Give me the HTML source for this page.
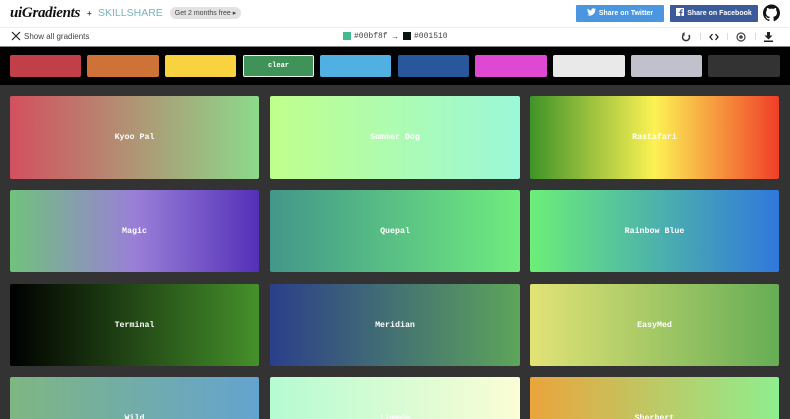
<!DOCTYPE html>
<html>
<head>
<meta charset="utf-8">
<style>
html,body{margin:0;padding:0;width:790px;height:419px;overflow:hidden;background:#333;font-family:"Liberation Sans",sans-serif}
#w{position:relative;width:790px;height:419px;overflow:hidden;background:#333}
.abs,.sw,.card{position:absolute}
.top{position:absolute;left:0;top:0;width:790px;height:27px;background:#fff}
.bar{position:absolute;left:0;top:27px;width:790px;height:19px;background:#fff;border-top:1px solid #eee}
.strip{position:absolute;left:0;top:46px;width:790px;height:39px;background:#020202;border-top:1px solid #888;box-sizing:border-box}
.sw{top:55px;height:22px;border-radius:2px}
.card{width:249px;height:83px;border-radius:2px;color:#fff;font:bold 8.3px/84px "Liberation Mono",monospace;text-align:center;overflow:hidden}
.last{height:42px;border-radius:2px 2px 0 0}
.t{position:absolute;white-space:nowrap}
.btn{position:absolute;top:5px;height:17px;border-radius:1px;color:#fff;font:bold 7px/17px "Liberation Sans",sans-serif;text-align:center}
</style>
</head>
<body>
<div id="w">
<div class="top"></div>
<div class="t" style="left:10px;top:4px;font:italic bold 15px/19px 'Liberation Serif',serif;color:#111;letter-spacing:-.3px">uiGradients</div>
<div class="t" style="left:87px;top:8px;font:bold 8px/11px 'Liberation Sans',sans-serif;color:#444">+</div>
<div class="t" style="left:98px;top:6px;font:10.500px/14px 'Liberation Sans',sans-serif;color:#75b5bd;letter-spacing:0">SKILLSHARE</div>
<div class="t" style="left:170px;top:7px;width:71px;height:12px;border-radius:6px;background:#e2e2e2;color:#444;font:7px/13px 'Liberation Sans',sans-serif;text-align:center">Get 2 months free ▸</div>
<div class="btn" style="left:576px;width:88px;background:#4a96e0"><svg width="9" height="8" viewBox="0 0 24 20" style="vertical-align:-1px;margin-right:3px"><path fill="#fff" d="M24 2.4c-.9.4-1.8.7-2.8.8 1-.6 1.8-1.6 2.2-2.7-1 .6-2 1-3.1 1.2A4.9 4.9 0 0 0 11.900 6.200C7.800 6 4.200 4 1.700 1c-1.300 2.300-.6 5.100 1.500 6.600-.8 0-1.600-.2-2.200-.6 0 2.400 1.700 4.400 3.900 4.900-.7.200-1.500.2-2.200.1.600 2 2.400 3.400 4.600 3.400A9.900 9.900 0 0 1 0 17.400 14 14 0 0 0 21.500 5c1-.7 1.900-1.600 2.500-2.600z"/></svg>Share on Twitter</div>
<div class="btn" style="left:670px;width:88px;background:#3b5a99"><svg width="8" height="8" viewBox="0 0 8 8" style="vertical-align:-1px;margin-right:3px"><path fill="#fff" d="M0 0h8v8H5.500V5h1l.2-1.200H5.500V3c0-.4.200-.6.600-.6h.7V1.300H5.800C4.700 1.300 4.200 2 4.200 3v.8h-1V5h1v3H0z"/></svg>Share on Facebook</div>
<svg class="abs" style="left:763px;top:4px" width="17" height="18" viewBox="0 0 16 16"><path fill="#111" d="M8 0C3.580 0 0 3.580 0 8c0 3.540 2.290 6.530 5.470 7.590.4.070.55-.17.55-.38v-1.340c-2.230.48-2.690-1.070-2.690-1.070-.36-.92-.89-1.170-.89-1.170-.73-.5.060-.49.060-.49.800.06 1.220.82 1.220.82.710 1.220 1.870.870 2.330.660.070-.52.280-.87.510-1.070-1.780-.2-3.640-.89-3.640-3.950 0-.87.310-1.590.820-2.150-.08-.2-.36-1.020.08-2.120 0 0 .67-.21 2.200.82a7.600 7.600 0 0 1 4 0c1.530-1.040 2.200-.82 2.200-.82.440 1.100.160 1.920.080 2.120.51.560.820 1.270.820 2.150 0 3.070-1.870 3.750-3.650 3.950.290.250.540.730.540 1.480v2.200c0 .210.150.460.550.380A8 8 0 0 0 16 8c0-4.420-3.580-8-8-8z"/></svg>

<div class="bar"></div>
<svg class="abs" style="left:11px;top:31px" width="10" height="10" viewBox="0 0 10 10"><path stroke="#222" stroke-width="1.200" fill="none" d="M1 1l8 8M9 1l-8 8"/></svg>
<div class="t" style="left:24px;top:31px;font:8px/12px 'Liberation Sans',sans-serif;color:#444">Show all gradients</div>
<div class="abs" style="left:343px;top:32px;width:8px;height:8px;background:#43bb8e"></div>
<div class="t" style="left:354px;top:31px;font:8px/12px 'Liberation Mono',monospace;color:#444">#00bf8f</div>
<div class="t" style="left:391px;top:31px;font:8px/12px 'Liberation Sans',sans-serif;color:#444">→</div>
<div class="abs" style="left:403px;top:32px;width:8px;height:8px;background:#0a1512"></div>
<div class="t" style="left:414px;top:31px;font:8px/12px 'Liberation Mono',monospace;color:#444">#001510</div>
<svg class="abs" style="left:681px;top:32px" width="10" height="10" viewBox="0 0 10 10"><path stroke="#333" stroke-width="1.500" fill="none" d="M7.800 3a3.500 3.500 0 1 1-5.400-.2"/><path fill="#333" d="M3.500 0v4L1 2z"/></svg>
<svg class="abs" style="left:709px;top:33px" width="10" height="8" viewBox="0 0 10 8"><path stroke="#222" stroke-width="1.300" fill="none" d="M3.500 1L1 4l2.500 3M6.500 1L9 4 6.500 7"/></svg>
<svg class="abs" style="left:736px;top:32px" width="10" height="10" viewBox="0 0 10 10"><circle cx="5" cy="5" r="4" stroke="#444" stroke-width="1.200" fill="none"/><circle cx="5" cy="5" r="1.800" fill="#444"/></svg>
<svg class="abs" style="left:764px;top:32px" width="9" height="10" viewBox="0 0 9 10"><path fill="#222" d="M3 0h3v3.500h2.500L4.500 7.500.5 3.500H3zM0 8.500h9V10H0z"/></svg>
<div class="abs" style="left:700px;top:33px;width:1px;height:7px;background:#ddd"></div>
<div class="abs" style="left:727px;top:33px;width:1px;height:7px;background:#ddd"></div>
<div class="abs" style="left:755px;top:33px;width:1px;height:7px;background:#ddd"></div>

<div class="strip"></div>
<div class="sw" style="left:10px;width:71px;background:#c13f49"></div>
<div class="sw" style="left:87px;width:72px;background:#cf7238"></div>
<div class="sw" style="left:165px;width:71px;background:#f8d23f"></div>
<div class="sw" style="left:243px;width:71px;height:22px;box-sizing:border-box;border:1px solid #e8f0e8;background:#3f9358;color:#fff;font:bold 7px/20px 'Liberation Mono',monospace;text-align:center">clear</div>
<div class="sw" style="left:320px;width:71px;background:#50b0e2"></div>
<div class="sw" style="left:398px;width:71px;background:#28589b"></div>
<div class="sw" style="left:475px;width:72px;background:#df48d3"></div>
<div class="sw" style="left:553px;width:72px;background:#e9e9e9"></div>
<div class="sw" style="left:631px;width:71px;background:#c0c1cc"></div>
<div class="sw" style="left:708px;width:72px;background:#333"></div>

<div class="card" style="left:10px;top:96px;background:linear-gradient(90deg,#d3505f,#8cda8a)">Kyoo Pal</div>
<div class="card" style="left:270px;top:96px;width:250px;background:linear-gradient(90deg,#c0ff8c,#9bf8d8)">Summer Dog</div>
<div class="card" style="left:530px;top:96px;background:linear-gradient(90deg,#3f9328,#fcf254 50%,#f03e28)">Rastafari</div>

<div class="card" style="left:10px;top:190px;height:82px;background:linear-gradient(90deg,#70c27c,#9a7fd8 50%,#5430b8)">Magic</div>
<div class="card" style="left:270px;top:190px;width:250px;height:82px;background:linear-gradient(90deg,#43968a,#6fec7e)">Quepal</div>
<div class="card" style="left:530px;top:190px;height:82px;background:linear-gradient(90deg,#6cee78,#2f78dc)">Rainbow Blue</div>

<div class="card" style="left:10px;top:284px;height:82px;background:linear-gradient(90deg,#000,#45912b)">Terminal</div>
<div class="card" style="left:270px;top:284px;width:250px;height:82px;background:linear-gradient(90deg,#2b3f8a,#5da55a)">Meridian</div>
<div class="card" style="left:530px;top:284px;height:82px;background:linear-gradient(90deg,#e2e376,#66ad55)">EasyMed</div>

<div class="card last" style="left:10px;top:377px;background:linear-gradient(90deg,#7fb682,#64a3d0)">Wild</div>
<div class="card last" style="left:270px;top:377px;width:250px;background:linear-gradient(90deg,#b5fbd2,#fbfdd5)">Limade</div>
<div class="card last" style="left:530px;top:377px;background:linear-gradient(90deg,#eba43c,#8fee8e)">Sherbert</div>
</div>
</body>
</html>
